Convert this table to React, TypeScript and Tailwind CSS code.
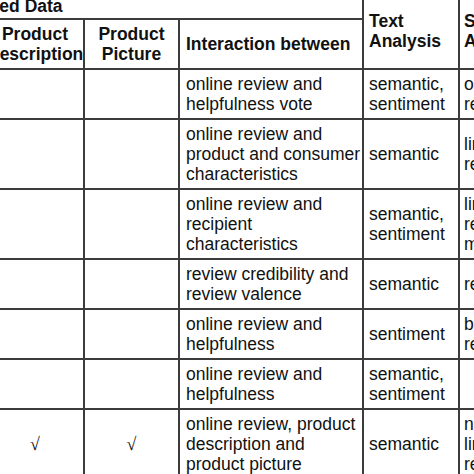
import React from "react";

type Row = {
  desc?: boolean;
  pic?: boolean;
  interaction: string[];
  text: string[];
  extra: string[];
};

const rows: Row[] = [
  { interaction: ["online review and", "helpfulness vote"], text: ["semantic,", "sentiment"], extra: ["online", "review"] },
  {
    interaction: ["online review and", "product and consumer", "characteristics"],
    text: ["semantic"],
    extra: ["linear", "regression"],
  },
  {
    interaction: ["online review and", "recipient", "characteristics"],
    text: ["semantic,", "sentiment"],
    extra: ["linear", "regression", "model"],
  },
  { interaction: ["review credibility and", "review valence"], text: ["semantic"], extra: ["regression"] },
  { interaction: ["online review and", "helpfulness"], text: ["sentiment"], extra: ["binary", "regression"] },
  { interaction: ["online review and", "helpfulness"], text: ["semantic,", "sentiment"], extra: [] },
  {
    desc: true,
    pic: true,
    interaction: ["online review, product", "description and", "product picture"],
    text: ["semantic"],
    extra: ["neural", "linear", "regression"],
  },
];

function Lines({ lines }: { lines: string[] }) {
  return (
    <>
      {lines.map((l, i) => (
        <div key={i} className="whitespace-nowrap">
          {l}
        </div>
      ))}
    </>
  );
}

const cell = "border-2 border-[#3c3c3c] py-[4px] align-middle";

export default function App() {
  return (
    <div className="w-[474px] h-[474px] overflow-hidden bg-white text-[#111] font-['Liberation_Sans',Arial,sans-serif] text-[17.5px] leading-[20px]">
      <table className="table-fixed border-collapse ml-[-15px] mt-[-8px] w-[573px]">
        <colgroup>
          <col className="w-[98px]" />
          <col className="w-[95px]" />
          <col className="w-[184px]" />
          <col className="w-[96px]" />
          <col className="w-[100px]" />
        </colgroup>
        <thead className="font-bold">
          <tr>
            <th colSpan={3} className="border-2 border-[#3c3c3c] py-[2px] px-0 text-left align-middle whitespace-nowrap indent-[-10px]">
              Used Data
            </th>
            <th rowSpan={2} className={`${cell} px-[5px] text-left`}>
              <Lines lines={["Text", "Analysis"]} />
            </th>
            <th rowSpan={2} className={`${cell} px-[4px] text-left`}>
              <Lines lines={["Statistical", "Analysis"]} />
            </th>
          </tr>
          <tr>
            <th className={`${cell} px-0 text-center`}>
              <Lines lines={["Product", "Description"]} />
            </th>
            <th className={`${cell} px-0 text-center`}>
              <Lines lines={["Product", "Picture"]} />
            </th>
            <th className={`${cell} px-[6px] text-left`}>
              <Lines lines={["Interaction between"]} />
            </th>
          </tr>
        </thead>
        <tbody>
          {rows.map((r, i) => (
            <tr key={i}>
              <td className={`${cell} text-center font-['Liberation_Serif',serif] text-[18px]`}>
                {r.desc ? "√" : ""}
              </td>
              <td className={`${cell} text-center font-['Liberation_Serif',serif] text-[18px]`}>
                {r.pic ? "√" : ""}
              </td>
              <td className={`${cell} px-[6px] text-left`}>
                <Lines lines={r.interaction} />
              </td>
              <td className={`${cell} px-[5px] text-left`}>
                <Lines lines={r.text} />
              </td>
              <td className={`${cell} px-[4px] text-left`}>
                <Lines lines={r.extra} />
              </td>
            </tr>
          ))}
        </tbody>
      </table>
    </div>
  );
}
